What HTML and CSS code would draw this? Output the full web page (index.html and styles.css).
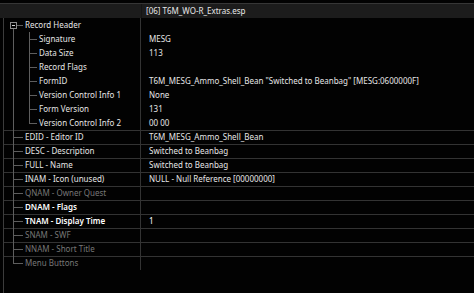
FILE: index.html
```html
<!DOCTYPE html>
<html>
<head>
<meta charset="utf-8">
<link rel="stylesheet" href="styles.css">
</head>
<body>
<div class="header">
  <div class="hcell hleft"></div>
  <div class="hcell hright">[06] T6M_WO-R_Extras.esp</div>
</div>
<div class="tree">
  <div class="row">
    <div class="lc">
      <svg class="g" width="19" height="14" viewBox="0 0 19 14">
        <rect x="6.5" y="4.5" width="6" height="6" fill="none" stroke="#8a8a8a"/>
        <line x1="8" y1="7.5" x2="11" y2="7.5" stroke="#d0d0d0"/>
        <line x1="13" y1="7.5" x2="19" y2="7.5" stroke="#5e5e5e"/>
        <line x1="9.5" y1="11" x2="9.5" y2="14" stroke="#5e5e5e"/>
      </svg>
      <span class="lbl">Record Header</span>
    </div>
    <div class="rc"></div>
  </div>
  <div class="row"><div class="lc"><span class="g pipe"></span><span class="g2 tee"></span><span class="lbl">Signature</span></div><div class="rc">MESG</div></div>
  <div class="row"><div class="lc"><span class="g pipe"></span><span class="g2 tee"></span><span class="lbl">Data Size</span></div><div class="rc">113</div></div>
  <div class="row"><div class="lc"><span class="g pipe"></span><span class="g2 tee"></span><span class="lbl">Record Flags</span></div><div class="rc"></div></div>
  <div class="row"><div class="lc"><span class="g pipe"></span><span class="g2 tee"></span><span class="lbl">FormID</span></div><div class="rc">T6M_MESG_Ammo_Shell_Bean "Switched to Beanbag" [MESG:0600000F]</div></div>
  <div class="row"><div class="lc"><span class="g pipe"></span><span class="g2 tee"></span><span class="lbl">Version Control Info 1</span></div><div class="rc">None</div></div>
  <div class="row"><div class="lc"><span class="g pipe"></span><span class="g2 tee"></span><span class="lbl">Form Version</span></div><div class="rc">131</div></div>
  <div class="row"><div class="lc"><span class="g pipe"></span><span class="g2 ell"></span><span class="lbl">Version Control Info 2</span></div><div class="rc">00 00</div></div>
  <div class="row sep"><div class="lc"><span class="g tee"></span><span class="lbl">EDID - Editor ID</span></div><div class="rc">T6M_MESG_Ammo_Shell_Bean</div></div>
  <div class="row sep"><div class="lc"><span class="g tee"></span><span class="lbl">DESC - Description</span></div><div class="rc">Switched to Beanbag</div></div>
  <div class="row sep"><div class="lc"><span class="g tee"></span><span class="lbl">FULL - Name</span></div><div class="rc">Switched to Beanbag</div></div>
  <div class="row sep"><div class="lc"><span class="g tee"></span><span class="lbl">INAM - Icon (unused)</span></div><div class="rc">NULL - Null Reference [00000000]</div></div>
  <div class="row sep dim"><div class="lc"><span class="g tee"></span><span class="lbl">QNAM - Owner Quest</span></div><div class="rc"></div></div>
  <div class="row sep bold"><div class="lc"><span class="g tee"></span><span class="lbl">DNAM - Flags</span></div><div class="rc"></div></div>
  <div class="row sep bold"><div class="lc"><span class="g tee"></span><span class="lbl">TNAM - Display Time</span></div><div class="rc">1</div></div>
  <div class="row sep dim"><div class="lc"><span class="g tee"></span><span class="lbl">SNAM - SWF</span></div><div class="rc"></div></div>
  <div class="row sep dim"><div class="lc"><span class="g tee"></span><span class="lbl">NNAM - Short Title</span></div><div class="rc"></div></div>
  <div class="row sep dim"><div class="lc"><span class="g ell"></span><span class="lbl">Menu Buttons</span></div><div class="rc"></div></div>
</div>
</body>
</html>
```
FILE: styles.css
```css
:root {
  --ln: #5e5e5e;
}
html, body {
  margin: 0;
  padding: 0;
  background: #020202;
  height: 293px;
  overflow: hidden;
}
body {
  font-family: "Noto Sans", "Open Sans", sans-serif;
  font-size: 8px;
  color: #e6e6e6;
}
.header {
  margin-top: 3px;
  height: 15px;
  box-sizing: border-box;
  border-top: 1px solid #363636;
  background: #1c1c1c;
  display: grid;
  grid-template-columns: 142px 1fr;
}
.hcell {
  line-height: 14px;
}
.hleft {
  border-right: 1px solid #141414;
}
.hright {
  padding-left: 4px;
  color: #e8e8e8;
}
.tree {
  margin-left: 3px;
  border-left: 1px solid #3c3c3c;
  height: 275px;
}
.row {
  display: grid;
  grid-template-columns: 137px 1fr;
  height: 14px;
  line-height: 14px;
}
.row.sep {
  box-shadow: inset 0 1px 0 #333333;
}
.lc {
  display: flex;
  align-items: stretch;
  border-right: 1px solid #333333;
  white-space: nowrap;
  overflow: hidden;
}
.rc {
  padding-left: 8px;
  white-space: nowrap;
  overflow: hidden;
}
.g {
  display: block;
  flex: none;
  width: 19px;
  height: 14px;
}
.g2 {
  display: block;
  flex: none;
  width: 14px;
  height: 14px;
}
.g.pipe {
  background: linear-gradient(var(--ln), var(--ln)) 9px 0 / 1px 100% no-repeat;
}
.g.tee {
  background:
    linear-gradient(var(--ln), var(--ln)) 9px 0 / 1px 100% no-repeat,
    linear-gradient(var(--ln), var(--ln)) 9px 7px / 10px 1px no-repeat;
}
.g.ell {
  background:
    linear-gradient(var(--ln), var(--ln)) 9px 0 / 1px 8px no-repeat,
    linear-gradient(var(--ln), var(--ln)) 9px 7px / 10px 1px no-repeat;
}
.g2.tee {
  background:
    linear-gradient(var(--ln), var(--ln)) 6px 0 / 1px 100% no-repeat,
    linear-gradient(var(--ln), var(--ln)) 6px 7px / 8px 1px no-repeat;
}
.g2.ell {
  background:
    linear-gradient(var(--ln), var(--ln)) 6px 0 / 1px 8px no-repeat,
    linear-gradient(var(--ln), var(--ln)) 6px 7px / 8px 1px no-repeat;
}
.lbl {
  padding-left: 2px;
}
.dim {
  color: #777777;
}
.bold {
  font-weight: 600;
  color: #ffffff;
}
.bold .rc {
  font-weight: 400;
}
```
